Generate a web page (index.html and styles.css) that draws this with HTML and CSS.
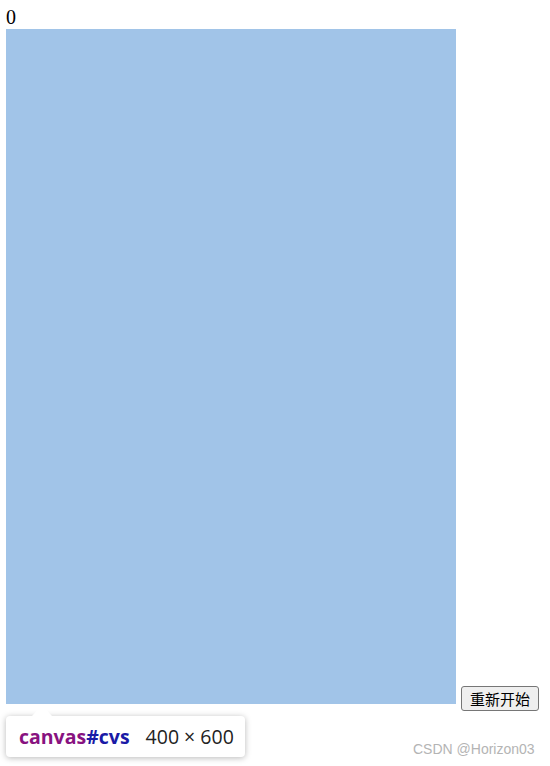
FILE: index.html
```html
<!DOCTYPE html>
<html>
<head>
<meta charset="utf-8">
<link rel="stylesheet" href="styles.css">
</head>
<body>
<div class="score">0</div>
<div class="row">
  <div class="cvs"></div>
  <button class="btn">重新开始</button>
</div>
<div class="tip">
  <span class="tag">canvas</span><span class="id">#cvs</span><span class="dim">400 × 600</span>
</div>
<div class="mark">CSDN @Horizon03</div>
</body>
</html>
```

FILE: styles.css
```css
html, body { margin: 0; padding: 0; background: #fff; }
body { padding: 6px 6px 0 6px; height: 760px; overflow: hidden; position: relative; }
.score { font-family: "Liberation Serif", serif; font-size: 20px; line-height: 23px; height: 23px; color: #000; }
.row { display: flex; align-items: flex-end; gap: 5px; }
.cvs { width: 450px; height: 675px; background: #a1c4e8; flex: none; }
.btn {
  margin-bottom: -7px;
  width: 78px; height: 25px; padding: 0;
  font-family: "Noto Sans CJK SC", sans-serif; font-size: 15px; line-height: 20px;
  background: #efefef; border: 1px solid #767676; border-radius: 3px; color: #000;
}
.tip {
  position: absolute; left: 6px; top: 716px;
  width: 239px; height: 41px; box-sizing: border-box;
  background: #fff; border-radius: 4px;
  box-shadow: 0 1px 6px rgba(0,0,0,0.28);
  display: flex; align-items: center; padding-left: 13px;
  font-family: "Open Sans", "Noto Sans", sans-serif; font-size: 19.5px;
}
.tip::before {
  content: ""; position: absolute; left: 26px; top: -11px;
  border-left: 10px solid transparent; border-right: 10px solid transparent;
  border-bottom: 11px solid #fff;
}
.tag { color: #881280; font-weight: 700; }
.id { color: #1a1aa6; font-weight: 700; }
.dim { color: #222; margin-left: 16px; }
.mark {
  position: absolute; left: 413px; top: 741px;
  font-family: "Liberation Sans", Arial, sans-serif; font-size: 14px; color: #b4b4b4;
}
```
